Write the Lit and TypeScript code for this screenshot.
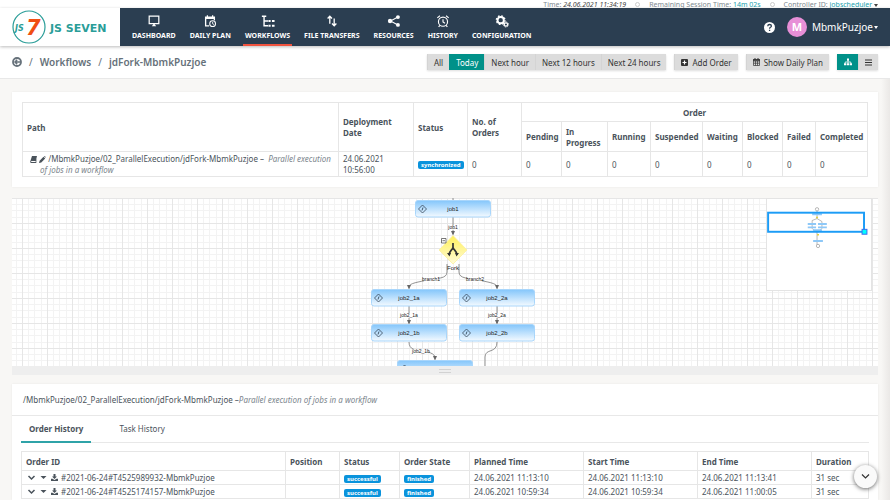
import { LitElement, html, css, svg } from "lit";
import { customElement, state } from "lit/decorators.js";
import { classMap } from "lit/directives/class-map.js";

const navIcons = {
  dashboard: svg`<path d="M2.500 2.500h11v8.500h-11z" fill="none" stroke="currentColor" stroke-width="1.400"/><path d="M5.500 14l2.500-3.500 2.500 3.500z" fill="currentColor"/>`,
  daily: svg`<path d="M7 13.500H3V3.500h10V7M3 5h10" fill="none" stroke="currentColor" stroke-width="1.500"/><path d="M5 1.500v3M11 1.500v3" stroke="currentColor" stroke-width="1.400"/><circle cx="11" cy="11" r="3.300" fill="none" stroke="currentColor" stroke-width="1.200"/><path d="M11 9v2.200l1.500.8" fill="none" stroke="currentColor"/>`,
  workflows: svg`<path d="M1 2.500h5M3.500 3v10.500H8M3.500 8H8" fill="none" stroke="currentColor" stroke-width="1.600"/><path d="M8.500 8h2.500M12.500 8h3M8.500 13.500h2.500M12.500 13.500h3" stroke="currentColor" stroke-width="2.400"/>`,
  transfers: svg`<path d="M5.500 11V3M3 5.200L5.500 2.500 8 5.200M10.500 5v8M8 10.800l2.500 2.700 2.500-2.700" fill="none" stroke="currentColor" stroke-width="1.500"/>`,
  resources: svg`<path d="M12.500 3.500L4 8l8.500 4.500" fill="none" stroke="currentColor" stroke-width="1.200"/><circle cx="3.500" cy="8" r="2.500" fill="currentColor"/><circle cx="12.500" cy="3.500" r="2.200" fill="currentColor"/><circle cx="12.500" cy="12.500" r="2.200" fill="currentColor"/>`,
  history: svg`<circle cx="8" cy="8.800" r="5.200" fill="none" stroke="currentColor" stroke-width="1.300"/><path d="M8 6v3l2.200 1.500M1.500 4.500L4.500 2M14.500 4.500L11.500 2M4.500 13L3 14.800M11.500 13l1.500 1.800" fill="none" stroke="currentColor" stroke-width="1.300"/>`,
  config: svg`<circle cx="6.500" cy="7" r="3.600" fill="none" stroke="currentColor" stroke-width="2.200"/><circle cx="6.500" cy="7" r="5" fill="none" stroke="currentColor" stroke-width="1.400" stroke-dasharray="2 1.927"/><circle cx="12.500" cy="12" r="1.900" fill="none" stroke="currentColor" stroke-width="1.400"/><circle cx="12.500" cy="12" r="2.900" fill="none" stroke="currentColor" stroke-width="1" stroke-dasharray="1.200 1.078"/>`,
};

const nav = [
  { label: "DASHBOARD", icon: navIcons.dashboard },
  { label: "DAILY PLAN", icon: navIcons.daily },
  { label: "WORKFLOWS", icon: navIcons.workflows },
  { label: "FILE TRANSFERS", icon: navIcons.transfers },
  { label: "RESOURCES", icon: navIcons.resources },
  { label: "HISTORY", icon: navIcons.history },
  { label: "CONFIGURATION", icon: navIcons.config },
];

const ranges = ["All", "Today", "Next hour", "Next 12 hours", "Next 24 hours"];
const states = ["Pending", "In Progress", "Running", "Suspended", "Waiting", "Blocked", "Failed", "Completed"];

const orders = [
  { id: "#2021-06-24#T4525989932-MbmkPuzjoe", planned: "24.06.2021 11:13:10", start: "24.06.2021 11:13:10", end: "24.06.2021 11:13:41", duration: "31 sec" },
  { id: "#2021-06-24#T4525174157-MbmkPuzjoe", planned: "24.06.2021 10:59:34", start: "24.06.2021 10:59:34", end: "24.06.2021 11:00:05", duration: "31 sec" },
];

const jobs = [
  { name: "job1", x: 415, y: 200 },
  { name: "job2_1a", x: 371, y: 289 },
  { name: "job2_2a", x: 459, y: 289 },
  { name: "job2_1b", x: 371, y: 324 },
  { name: "job2_2b", x: 459, y: 324 },
  { name: "", x: 397, y: 360 },
];

const edges = [
  { d: "M453 198v2", x: 0, y: 0, label: "" },
  { d: "M453 217V234", x: 453, y: 229, label: "job1" },
  { d: "M447 264v8c0 7-10 6-19 8s-19 3-19 7", x: 431, y: 281, label: "branch1" },
  { d: "M459 264v8c0 7 10 6 19 8s19 3 19 7", x: 475, y: 281, label: "branch2" },
  { d: "M409 306v17", x: 409, y: 317, label: "job2_1a" },
  { d: "M497 306v17", x: 497, y: 317, label: "job2_2a" },
  { d: "M409 342c0 8 7 8 13 9s13 2 13 7", x: 421, y: 353, label: "job2_1b" },
];

const arrows = [[453, 235], [409, 289], [497, 289], [409, 324], [497, 324], [435, 360]];

@customElement("workflow-graph")
class WorkflowGraph extends LitElement {
  static styles = css`
    :host { display: block; position: relative; flex: none; height: 168px; background: #fff; overflow: hidden; }
    .grid { display: block; width: 100%; height: 100%; }
    .graph { position: absolute; top: 0; left: calc(50% - 85px); }
    .map { position: absolute; top: 0; right: 6px; background: #fff; border: 1px solid #e4e4e4; box-sizing: border-box; }
    text { font-family: "Liberation Sans", Arial, sans-serif; text-anchor: middle; fill: #222; }
    .name { font-size: 6px; }
    .edge { font-size: 5px; }
  `;

  render() {
    return html`
      <svg class="grid" aria-hidden="true">
        <defs>
          <pattern id="grid" x="10" y="0" width="25" height="25" patternUnits="userSpaceOnUse">
            <path d="M6.500 0v25M12.500 0v25M19.500 0v25M0 6.500h25M0 12.500h25M0 19.500h25" stroke="#f3f3f3" fill="none" />
            <path d="M.5 0v25M0 .5h25" stroke="#e6e6e6" fill="none" />
          </pattern>
        </defs>
        <rect width="100%" height="100%" fill="url(#grid)" />
      </svg>
      <svg class="graph" width="190" height="168" viewBox="360 198 190 168">
        <defs>
          <linearGradient id="job" x1="0" y1="0" x2="0" y2="1">
            <stop offset="0" stop-color="#84c6fb" /><stop offset="1" stop-color="#f4faff" />
          </linearGradient>
          <linearGradient id="fork" x1="0" y1="0" x2="0" y2="1">
            <stop offset="0" stop-color="#fff05a" /><stop offset="1" stop-color="#fffbd8" />
          </linearGradient>
        </defs>
        ${edges.map((e) => svg`
          <path d=${e.d} fill="none" stroke="#777" stroke-width=".8" />
          ${e.label ? svg`<rect x=${e.x - e.label.length} y=${e.y - 4} width=${e.label.length * 2} height="5" fill="#fff" opacity=".85" /><text class="edge" x=${e.x} y=${e.y}>${e.label}</text>` : ""}`)}
        <path d="M497 342c0 12-12 6-12 15v9" fill="none" stroke="#777" stroke-width=".8" />
        ${arrows.map(([x, y]) => svg`<path d="M${x - 2} ${y - 4}h4l-2 4.500z" fill="#666" />`)}
        ${jobs.map((j) => svg`
          <rect x=${j.x + 0.5} y=${j.y + 0.5} width="75" height="16.500" rx="2.500" fill="url(#job)" stroke="#a9d6fb" />
          <path d="M${j.x + 7.500} ${j.y + 5}l4 4-4 4-4-4z" fill="none" stroke="#345" stroke-width=".8" />
          <path d="M${j.x + 8} ${j.y + 7.500}l-1 3" stroke="#234" stroke-width=".8" />
          <text class="name" x=${j.x + 38} y=${j.y + 11}>${j.name}</text>`)}
        <path d="M453 235.500l14 14.500-14 14-14-14z" fill="url(#fork)" stroke="#fbf0a0" stroke-width=".8" />
        <path d="M453 243v5M453 247.500c-1 3-4 3.500-4 7.500M453 247.500c1 3 4 3.500 4 7.500" fill="none" stroke="#333" stroke-width="1.700" />
        <path d="M447 253h4l-1.500 3.500zM455 253h4l-2.500 3.500z" fill="#333" />
        <path d="M441.500 238.500h4.500v4.500h-4.500zM442.500 240.700h2.500" fill="#fff" stroke="#555" stroke-width=".8" />
        <text class="name" x="453" y="270">Fork</text>
      </svg>
      <svg class="map" width="106" height="93" viewBox="766 198 106 93">
        <path d="M817 210v8l-5 2v8l5 5v12M817 218l5 3v7l-5 5" fill="none" stroke="#999" stroke-width=".7" />
        <path d="M812 213.500h10M807.500 223.500h8.500M818 223.500h9M807.500 227h8.500M818 227h9M813 230h9M813 241h10" stroke="#8ec8f7" stroke-width="2" />
        <path d="M816 217h2M817 234.500h2" stroke="#e3cf3c" stroke-width="1.500" />
        <circle cx="817" cy="208.500" r="1.700" fill="#fff" stroke="#999" stroke-width=".7" />
        <circle cx="818" cy="246" r="1.700" fill="#fff" stroke="#999" stroke-width=".7" />
        <rect x="767" y="212" width="98" height="19.500" fill="none" stroke="#1c9cf6" stroke-width="2" />
        <rect x="863" y="229" width="5" height="5" fill="#0ff" stroke="#3a6cf0" />
      </svg>
    `;
  }
}

@customElement("app-root")
class AppRoot extends LitElement {
  @state() range = "Today";

  static styles = css`
    :host { display: flex; flex-direction: column; height: 100vh; overflow: hidden; background: #f8f7f5; color: #4a535b; font: 8px/11px "Noto Sans", "Open Sans", sans-serif; }
    * { box-sizing: border-box; }
    button { font: inherit; color: inherit; border: 0; padding: 0; background: none; }
    a { color: inherit; text-decoration: none; }
    i { color: #7c868d; }
    .status { display: flex; flex: none; justify-content: flex-end; align-items: flex-start; gap: 9px; height: 8px; padding-right: 12px; background: #fff; color: #808a91; font-size: 7px; line-height: 10px; }
    .status em { color: #444; }
    .status a { color: #1ba0ad; }
    .dot { width: 5px; height: 5px; margin-top: 2px; border: 1px solid #ccc; border-radius: 50%; }
    .down { display: inline-block; border: 2px solid transparent; border-top: 3px solid currentColor; border-bottom: 0; vertical-align: middle; }
    .status .down { color: #444; }
    .top { display: flex; flex: none; height: 38px; background: #2b3e51; color: #fff; box-shadow: 0 1px 3px #0004; z-index: 1; }
    .logo { display: block; width: 120px; background: #fff; }
    .logo text { font-family: "DejaVu Sans", sans-serif; font-weight: bold; fill: #2a9d98; }
    .brand { font-size: 11px; }
    .mini { font-size: 8px; font-style: italic; }
    .logo .seven { font-size: 21px; font-style: italic; fill: #f04e12; }
    nav { display: flex; flex: 1; padding-left: 10px; gap: 10px; }
    nav a { display: flex; flex-direction: column; align-items: center; padding: 6px 2px 0; border-bottom: 2px solid transparent; font-size: 7px; line-height: 10px; font-weight: bold; gap: 3px; white-space: nowrap; }
    nav a.on { border-color: #f0533f; }
    .user { display: flex; align-items: center; gap: 5px; padding-right: 12px; font-size: 10px; }
    .help { display: flex; }
    .avatar { width: 20px; height: 20px; margin-left: 7px; border-radius: 50%; background: #e78fd7; font-size: 11px; font-weight: bold; line-height: 20px; text-align: center; }
    .account { display: flex; align-items: center; gap: 1px; }
    .bar { display: flex; flex: none; align-items: center; justify-content: space-between; height: 33px; padding: 0 12px; background: #fff; border-bottom: 1px solid #e8e8e8; }
    .crumbs { display: flex; align-items: center; gap: 7px; font-size: 10px; font-weight: 600; color: #66717a; }
    .slash { font-weight: normal; }
    .tools { display: flex; gap: 8px; color: #333; }
    .group { display: flex; box-shadow: 0 1px 2px #0002; }
    .group button { height: 16px; padding: 0 6px; background: #dcdcdc; border-left: 1px solid #d4d4d4; white-space: nowrap; display: flex; align-items: center; gap: 4px; }
    .group button.on { background: #009189; border-color: #009189; color: #fff; }
    main { display: flex; flex: 1; flex-direction: column; padding: 13px 12px 0; min-height: 0; background: linear-gradient(to left, #eae8e6, #f8f7f5 9px); }
    .card { background: #fff; box-shadow: 0 0 2px #0001; }
    .summary { flex: none; padding: 10px; margin-bottom: 11px; }
    table { width: 100%; border-collapse: collapse; table-layout: fixed; }
    th, td { border: 1px solid #e6e6e6; padding: 0 4px; text-align: left; overflow: hidden; }
    .summary th { height: 19px; }
    .summary tr + tr th { height: 30px; }
    .summary td { height: 25px; }
    .summary th.center { text-align: center; }
    .summary td.path { padding-left: 17px; text-indent: -10px; }
    .glyph { display: inline-block; vertical-align: -1px; }
    .badge { display: inline-block; padding: 0 3px; border-radius: 2px; background: #0a93dc; color: #fff; font-size: 6px; line-height: 8px; font-weight: bold; vertical-align: middle; }
    .w33 { width: 33px; } .w40 { width: 40px; } .w43 { width: 43px; } .w46 { width: 46px; } .w52 { width: 52px; } .w54 { width: 54px; } .w60 { width: 60px; } .w70 { width: 70px; } .w75 { width: 75px; } .w114 { width: 114px; } .w57 { width: 57px; }
    .split { flex: none; height: 9px; margin-bottom: 9px; background: #eee; display: flex; flex-direction: column; align-items: center; justify-content: center; gap: 2px; }
    .split span { width: 12px; height: 1px; background: #d2d2d2; }
    .history { flex: 1; min-height: 0; }
    .title { height: 32px; padding: 0 11px; line-height: 31px; border-bottom: 1px solid #e8e8e8; }
    .tabs { display: flex; gap: 20px; height: 27px; margin: 0 9px 8px; border-bottom: 1px solid #e8e8e8; }
    .tabs button { height: 27px; padding: 0 8px; border-bottom: 2px solid transparent; }
    .tabs button.on { border-color: #2fa3a8; font-weight: bold; }
    .list { padding: 0 9px; }
    .list th { height: 19px; }
    .list td { height: 14px; line-height: 13px; }
    .idcell { display: flex; align-items: center; gap: 3px; padding-left: 1px; }
    .idcell button { display: flex; }
    .fab { position: fixed; right: 13px; bottom: 12px; width: 23px; height: 23px; border-radius: 50%; background: #fafafa; box-shadow: 0 1px 4px #0009; display: flex; align-items: center; justify-content: center; }
  `;

  private path = "/MbmkPuzjoe/02_ParallelExecution/jdFork-MbmkPuzjoe";

  render() {
    const widths = ["", "w75", "w54", "w54", "w40", "w46", "w43", "w52", "w40", "w40", "w33", "w52"];
    const listWidths = ["", "w54", "w60", "w70", "w114", "w114", "w114", "w57"];
    return html`
      <div class="status">
        <span>Time: <em>24.06.2021 11:34:19</em></span><span class="dot"></span>
        <span>Remaining Session Time: <a href="#">14m 02s</a></span><span class="dot"></span>
        <span>Controller ID: <a href="#">jobscheduler</a> <span class="down"></span></span>
      </div>
      <header class="top">
        <a class="logo" href="#" aria-label="JS SEVEN">
          <svg width="120" height="38" viewBox="0 0 120 38">
            <circle cx="29" cy="19" r="16" fill="none" stroke="#2a9d98" stroke-width="1.200" />
            <text class="mini" x="15" y="23">JS</text>
            <text class="seven" x="26" y="27">7</text>
            <text class="brand" x="50" y="24">JS SEVEN</text>
          </svg>
        </a>
        <nav>
          ${nav.map((n) => html`<a href="#" class=${classMap({ on: n.label === "WORKFLOWS" })}>
            <svg width="14" height="14" viewBox="0 0 16 16">${n.icon}</svg>${n.label}</a>`)}
        </nav>
        <div class="user">
          <button class="help" aria-label="Help"><svg width="11" height="11" viewBox="0 0 11 11"><circle cx="5.500" cy="5.500" r="5.500" fill="#fff" /><path d="M3.700 4.200q.1-1.700 1.900-1.700t1.800 1.500q0 .8-.9 1.300t-.9 1.400M5.600 7.700v1.300" fill="none" stroke="#2b3e51" stroke-width="1.300" /></svg></button>
          <span class="avatar">M</span>
          <button class="account">MbmkPuzjoe <span class="down"></span></button>
        </div>
      </header>
      <div class="bar">
        <div class="crumbs">
          <button aria-label="Back"><svg class="glyph" width="10" height="10" viewBox="0 0 10 10"><circle cx="5" cy="5" r="4" fill="none" stroke="currentColor" stroke-width="1.800" /><path d="M8 5H3M5.200 2.800L3 5l2.200 2.200" fill="none" stroke="currentColor" stroke-width="1.500" /></svg></button>
          <span class="slash">/</span><a href="#">Workflows</a><span class="slash">/</span><span>jdFork-MbmkPuzjoe</span>
        </div>
        <div class="tools">
          <div class="group">
            ${ranges.map((r) => html`<button class=${classMap({ on: r === this.range })} @click=${() => (this.range = r)}>${r}</button>`)}
          </div>
          <div class="group"><button><svg width="7" height="7" viewBox="0 0 7 7"><rect width="7" height="7" rx="1" fill="currentColor" /><path d="M3.500 1.500v4M1.500 3.500h4" stroke="#fff" stroke-width="1.200" /></svg>Add Order</button></div>
          <div class="group"><button><svg width="7" height="8" viewBox="0 0 7 8"><path d="M.5 1.500h6v6h-6zM.5 3h6M2.500 3v4.500M4.500 3v4.500M.5 5.200h6" fill="none" stroke="currentColor" stroke-width=".7" /><path d="M0 1.200h7v1.600H0zM1.500 0h1v2h-1zM4.500 0h1v2h-1z" fill="currentColor" /></svg>Show Daily Plan</button></div>
          <div class="group">
            <button class="on" aria-label="Graph view"><svg width="8" height="8" viewBox="0 0 8 8"><path d="M3 .5h2v2.300H3zM0 5.200h2.300v2H0zM2.900 5.200h2.200v2H2.900zM5.700 5.200H8v2H5.700z" fill="currentColor" /><path d="M4 2.500v3M1.200 5.500V4h5.600v1.500" fill="none" stroke="currentColor" stroke-width=".8" /></svg></button>
            <button aria-label="List view"><svg width="7" height="7" viewBox="0 0 7 7"><path d="M0 1h7M0 3.500h7M0 6h7" stroke="currentColor" stroke-width="1.200" /></svg></button>
          </div>
        </div>
      </div>
      <main>
        <section class="card summary">
          <table>
            <colgroup>${widths.map((w) => html`<col class=${w} />`)}</colgroup>
            <tr><th rowspan="2">Path</th><th rowspan="2">Deployment Date</th><th rowspan="2">Status</th><th rowspan="2">No. of Orders</th><th class="center" colspan="8">Order</th></tr>
            <tr>${states.map((s) => html`<th>${s}</th>`)}</tr>
            <tr>
              <td class="path"><svg class="glyph" width="7" height="7" viewBox="0 0 7 7"><path d="M2 0h5L5.800 5H1.200v1H5.500L6.500 2.500 6.300 7H.8Q0 6.500.3 5.200z" fill="currentColor" /></svg> <svg class="glyph" width="7" height="7" viewBox="0 0 7 7"><path d="M0 7l.6-2.300L4.500.8l1.700 1.700-3.900 3.900zM5 .4q.6-.7 1.300 0t.3 1.300z" fill="currentColor" /></svg>
                ${this.path} – &nbsp;<i>Parallel execution of jobs in a workflow</i></td>
              <td>24.06.2021 10:56:00</td><td><span class="badge">synchronized</span></td><td>0</td>
              ${states.map(() => html`<td>0</td>`)}
            </tr>
          </table>
        </section>
        <workflow-graph></workflow-graph>
        <div class="split"><span></span><span></span></div>
        <section class="card history">
          <div class="title">${this.path} –<i>Parallel execution of jobs in a workflow</i></div>
          <div class="tabs"><button class="on">Order History</button><button>Task History</button></div>
          <div class="list">
            <table>
              <colgroup>${listWidths.map((w) => html`<col class=${w} />`)}</colgroup>
              <tr>${["Order ID", "Position", "Status", "Order State", "Planned Time", "Start Time", "End Time", "Duration"].map((h) => html`<th>${h}</th>`)}</tr>
              ${orders.map((o) => html`<tr>
                <td><div class="idcell">
                  <button aria-label="Expand"><svg width="9" height="7" viewBox="0 0 9 7"><path d="M1.500 2l3 3 3-3" fill="none" stroke="currentColor" stroke-width="1.500" /></svg></button>
                  <button aria-label="Actions"><svg width="9" height="7" viewBox="0 0 9 7"><path d="M1.500 2h6l-3 3z" fill="currentColor" /></svg></button>
                  <button aria-label="Download"><svg width="7" height="7" viewBox="0 0 7 7"><path d="M2.500 0h2v2.500H6L3.500 5 1 2.500h1.500zM0 4.800h1.500L3.500 6l2-1.200H7V7H0z" fill="currentColor" /></svg></button>${o.id}</div></td>
                <td></td><td><span class="badge">successful</span></td><td><span class="badge">finished</span></td>
                <td>${o.planned}</td><td>${o.start}</td><td>${o.end}</td><td>${o.duration}</td>
              </tr>`)}
            </table>
          </div>
        </section>
      </main>
      <button class="fab" aria-label="Scroll down"><svg width="9" height="7" viewBox="0 0 9 7"><path d="M1 1.500l3.500 3.500L8 1.500" fill="none" stroke="#333" stroke-width="1.200" /></svg></button>
    `;
  }
}
